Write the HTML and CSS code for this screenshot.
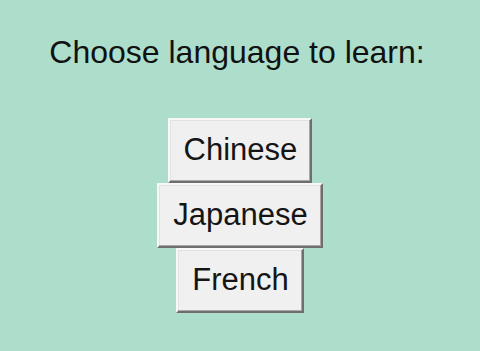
FILE: index.html
```html
<!DOCTYPE html>
<html>
<head>
<meta charset="utf-8">
<link rel="stylesheet" href="styles.css">
</head>
<body>
<div class="app">
  <div class="title">Choose language to learn:</div>
  <div class="choices">
    <button class="btn">Chinese</button>
    <button class="btn">Japanese</button>
    <button class="btn">French</button>
  </div>
</div>
</body>
</html>
```

FILE: styles.css
```css
html, body {
  margin: 0;
  padding: 0;
  background: #addecb;
  width: 480px;
  height: 351px;
  overflow: hidden;
}
.app {
  display: flex;
  flex-direction: column;
  align-items: center;
  padding-top: 34px;
  font-family: "Liberation Sans", Arial, sans-serif;
}
.title {
  font-size: 32px;
  line-height: 37px;
  color: #111;
  margin-right: 6px;
}
.choices {
  display: flex;
  flex-direction: column;
  align-items: center;
  margin-top: 47px;
}
.btn {
  font-family: "Liberation Sans", Arial, sans-serif;
  font-size: 31px;
  line-height: 36px;
  color: #151515;
  background: #f0f0f0;
  padding: 12px 13px 13px 14px;
  margin: 0;
  border: 2px solid;
  border-color: #f8f8f8 #6e6e6e #6e6e6e #f8f8f8;
  box-shadow: inset -1px -1px 0 #a8a8a8, inset 1px 1px 0 #e2e2e2;
  border-radius: 0;
}
```
